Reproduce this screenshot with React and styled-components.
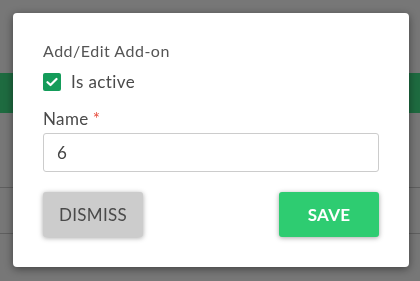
import React from "react";
import styled, { createGlobalStyle } from "styled-components";

const Global = createGlobalStyle`
    html, body {
        margin: 0;
        padding: 0;
        background: #777777;
        font-family: "Lato", "Open Sans", sans-serif;
    }
`

const Page = styled.div`
    height: 281px;
    overflow: hidden;
    display: flex;
    flex-direction: column;
`

const Spacer = styled.div`
    height: ${p => p.h}px;
`

const GreenBar = styled.div`
    height: 40px;
    background: #1e6b40;
`

const Row = styled.div`
    height: 45px;
    border-bottom: 1px solid #5f5f5f;
`

const Modal = styled.div`
    position: fixed;
    left: 13px;
    top: 13px;
    width: 396px;
    box-sizing: border-box;
    padding: 28px 30px 30px;
    background: #fff;
    border-radius: 4px;
    box-shadow: 0 2px 8px rgba(0, 0, 0, 0.45);
    display: flex;
    flex-direction: column;
    color: #4a4a4a;
`

const Title = styled.div`
    font-size: 16px;
    letter-spacing: 0.5px;
    line-height: 20px;
    color: #555;
`

const CheckRow = styled.label`
    display: flex;
    align-items: center;
    gap: 10px;
    margin-top: 12px;
    font-size: 17px;
    letter-spacing: 0.4px;
    line-height: 18px;
`

const Box = styled.span`
    width: 18px;
    height: 18px;
    border-radius: 2px;
    background: #149c5a;
    display: flex;
    align-items: center;
    justify-content: center;
`

const FieldLabel = styled.div`
    margin-top: 18px;
    font-size: 17px;
    letter-spacing: 0.4px;
    line-height: 20px;
`

const Req = styled.span`
    color: #e74c3c;
    margin-left: 4px;
`

const Input = styled.input`
    margin-top: 4px;
    height: 39px;
    box-sizing: border-box;
    border: 1px solid #cccccc;
    border-radius: 3px;
    padding: 0 13px;
    font-family: inherit;
    font-size: 17px;
    color: #444;
    outline: none;
`

const Actions = styled.div`
    margin-top: 20px;
    display: flex;
    justify-content: space-between;
`

const Button = styled.button`
    width: 100px;
    height: 45px;
    border: none;
    border-radius: 3px;
    font-family: inherit;
    font-size: 17px;
    letter-spacing: 0.3px;
    font-weight: ${p => (p.primary ? 700 : 400)};
    background: ${p => (p.primary ? "#2ecc71" : "#cccccc")};
    color: ${p => (p.primary ? "#fff" : "#4a4a4a")};
    box-shadow: 0 1px 5px rgba(0, 0, 0, 0.35);
    cursor: pointer;
`

export default function App() {
    return (
        <>
            <Global />
            <Page>
                <Spacer h={73} />
                <GreenBar />
                <Spacer h={29} />
                <Row />
                <Row />
            </Page>
            <Modal>
                <Title>Add/Edit Add-on</Title>
                <CheckRow>
                    <Box>
                        <svg width="12" height="10" viewBox="0 0 12 10">
                            <path d="M1.5 5.2 L4.5 8 L10.5 2" fill="none" stroke="#fff" strokeWidth="2.2" strokeLinecap="round" strokeLinejoin="round" />
                        </svg>
                    </Box>
                    Is active
                </CheckRow>
                <FieldLabel>Name<Req>*</Req></FieldLabel>
                <Input defaultValue="6" />
                <Actions>
                    <Button>DISMISS</Button>
                    <Button primary>SAVE</Button>
                </Actions>
            </Modal>
        </>
    )
}
